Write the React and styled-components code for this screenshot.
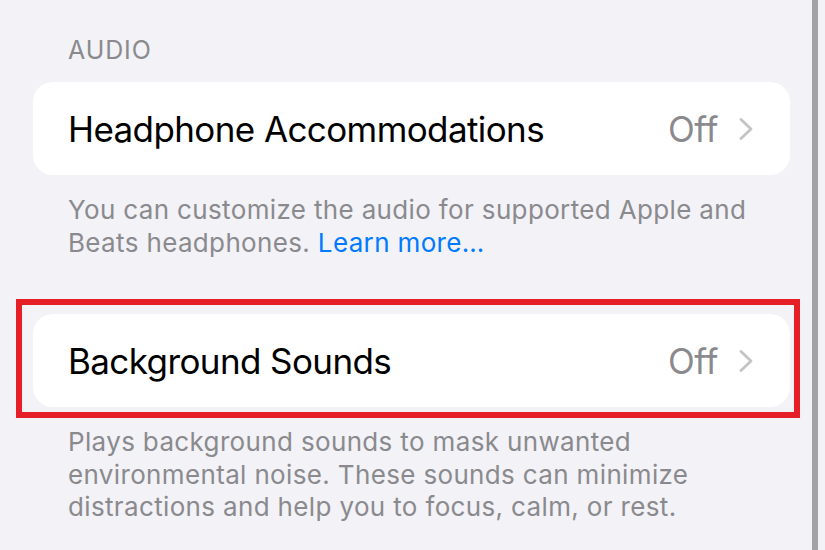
import React from 'react';
import styled, { createGlobalStyle } from 'styled-components';

const GlobalStyle = createGlobalStyle`
    html, body {
        margin: 0;
        padding: 0;
        background: #f2f2f7;
    }
    body {
        font-family: Inter, "Noto Sans", "Liberation Sans", sans-serif;
        -webkit-font-smoothing: antialiased;
    }
`

const Chevron = () => (
    <svg width="16" height="24" viewBox="0 0 16 24" fill="none">
        <path d="M3 2.5 L13 12 L3 21.5" stroke="#c4c4c7" strokeWidth="2.8" strokeLinecap="round" strokeLinejoin="round" />
    </svg>
)

const App = () => {
    return (
        <>
            <GlobalStyle />
            <Page>
                <Settings>
                    <SectionHeader>AUDIO</SectionHeader>
                    <Card>
                        <RowTitle>Headphone Accommodations</RowTitle>
                        <RowValue>
                            Off
                            <Chevron />
                        </RowValue>
                    </Card>
                    <Footnote>
                        You can customize the audio for supported Apple and Beats headphones.{' '}
                        <LearnMore href="#">Learn more…</LearnMore>
                    </Footnote>

                    <Card $highlighted $gapTop={55}>
                        <RowTitle>Background Sounds</RowTitle>
                        <RowValue>
                            Off
                            <Chevron />
                        </RowValue>
                    </Card>
                    <Footnote>
                        Plays background sounds to mask unwanted environmental noise. These sounds can minimize distractions and help you to focus, calm, or rest.
                    </Footnote>
                </Settings>
                <Divider />
                <Gutter />
            </Page>
        </>
    )
};

export default App;


const Page = styled.div`
    display: flex;
    width: 825px;
    height: 550px;
    overflow: hidden;
    background: #f2f2f7;
`

const Settings = styled.div`
    width: 812px;
    box-sizing: border-box;
    padding: 34px 22px 0 33px;
    display: flex;
    flex-direction: column;
`

const Divider = styled.div`
    width: 6px;
    background: #a2a2a6;
`

const Gutter = styled.div`
    flex: 1;
    background: #f2f2f7;
`

const SectionHeader = styled.div`
    padding-left: 35px;
    font-size: 25px;
    line-height: 32px;
    color: #8a8a8e;
    letter-spacing: 0.9px;
    margin-bottom: 16px;
`

const Card = styled.div`
    position: relative;
    height: 93px;
    margin-top: ${props => props.$gapTop || 0}px;
    box-sizing: border-box;
    background: #fff;
    border-radius: 20px;
    display: flex;
    align-items: center;
    justify-content: space-between;
    padding: 0 36px 0 35px;

    ${props => props.$highlighted && `
        &::after {
            content: '';
            position: absolute;
            top: -15px;
            left: -17px;
            right: -10px;
            bottom: -11px;
            border: 6px solid #e61e28;
            pointer-events: none;
        }
    `}
`

const RowTitle = styled.span`
    font-size: 35px;
    color: #000;
    letter-spacing: -0.6px;
`

const RowValue = styled.span`
    display: flex;
    align-items: center;
    gap: 20px;
    font-size: 35px;
    color: #8a8a8e;
    letter-spacing: -0.4px;
`

const Footnote = styled.p`
    margin: 19px 0 0;
    padding: 0 28px 0 35px;
    font-size: 26px;
    line-height: 32.5px;
    color: #8a8a8e;
    letter-spacing: 0.35px;
`

const LearnMore = styled.a`
    color: #007aff;
    text-decoration: none;
`
